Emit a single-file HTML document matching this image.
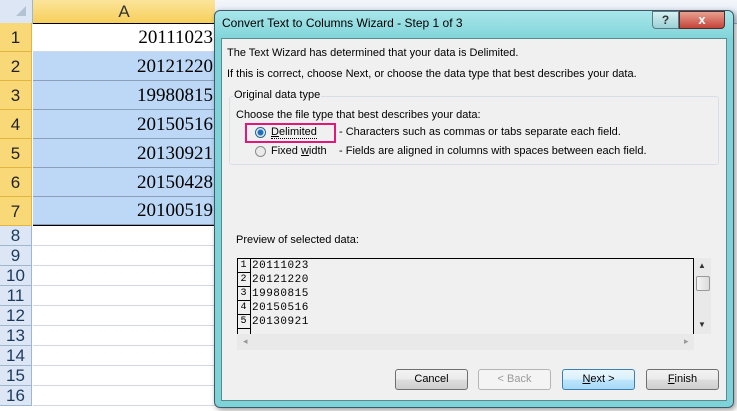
<!DOCTYPE html>
<html><head><style>
body{margin:0;width:737px;height:411px;overflow:hidden;background:#fff;font-family:"Liberation Sans",sans-serif;position:relative}
.a{position:absolute}
.rh{position:absolute;left:0;width:32px;background:#dce6f4;border-right:1px solid #9eb6ce;border-bottom:1px solid #9eb6ce;box-sizing:border-box;text-align:center;color:#1c3a5e;font-size:17px}
.rhs{background:#f9d977;border-color:#e2b540;color:#222}
.cell{position:absolute;left:33px;width:188px;border-bottom:1px solid #d0d7e5;box-sizing:border-box;text-align:right;font-family:"Liberation Serif",serif;font-size:19px;padding-right:8px}
.sel{background:#bcd8f6;border-bottom:1px solid #8a9fb8}
.t{position:absolute;font-size:11px;color:#000;white-space:nowrap}
.btn{position:absolute;top:369px;width:73px;height:21px;border:1px solid #707070;border-radius:3px;background:linear-gradient(#f2f2f2,#ebebeb 50%,#dddddd 51%,#cfcfcf);box-sizing:border-box;text-align:center;font-size:11px;line-height:19px}
.ln{position:absolute;left:237px;width:14px;height:14px;border-right:1px solid #000;border-bottom:1px solid #000;box-sizing:border-box;font-family:"Liberation Mono",monospace;font-size:10px;line-height:14px;text-align:center}
.pv{position:absolute;left:252px;font-family:"Liberation Mono",monospace;font-size:11px;line-height:14px;letter-spacing:0.5px}
</style></head><body>
<div class="a" style="left:0;top:0;width:737px;height:23px;background:linear-gradient(#f4f7fb,#dde6f2);border-bottom:1px solid #9eb6ce"></div>
<div class="a" style="left:0;top:0;width:32px;height:23px;background:#dce6f4;border-right:1px solid #9eb6ce"></div>
<div class="a" style="left:16px;top:6px;width:0;height:0;border-left:10px solid transparent;border-bottom:10px solid #b4c2d4"></div>
<div class="a" style="left:33px;top:0;width:182px;height:23px;background:linear-gradient(#fbe49a,#f7cf5a);border-bottom:1px solid #e2b540;text-align:center;font-size:17px;line-height:23px;color:#333">A</div>
<div class="rh rhs" style="top:23px;height:29px;line-height:29px">1</div>
<div class="rh rhs" style="top:52px;height:29px;line-height:29px">2</div>
<div class="rh rhs" style="top:81px;height:29px;line-height:29px">3</div>
<div class="rh rhs" style="top:110px;height:29px;line-height:29px">4</div>
<div class="rh rhs" style="top:139px;height:29px;line-height:29px">5</div>
<div class="rh rhs" style="top:168px;height:29px;line-height:29px">6</div>
<div class="rh rhs" style="top:197px;height:29px;line-height:29px">7</div>
<div class="a" style="left:33px;top:23px;width:182px;height:203px;border:1px solid #000;box-sizing:border-box"></div>
<div class="cell" style="top:24px;height:28px;line-height:28px;background:#fff">20111023</div>
<div class="cell sel" style="top:52px;height:29px;line-height:29px">20121220</div>
<div class="cell sel" style="top:81px;height:29px;line-height:29px">19980815</div>
<div class="cell sel" style="top:110px;height:29px;line-height:29px">20150516</div>
<div class="cell sel" style="top:139px;height:29px;line-height:29px">20130921</div>
<div class="cell sel" style="top:168px;height:29px;line-height:29px">20150428</div>
<div class="cell sel" style="top:197px;height:28px;line-height:28px">20100519</div>
<div class="rh" style="top:226px;height:20px;line-height:20px">8</div>
<div class="rh" style="top:246px;height:20px;line-height:20px">9</div>
<div class="rh" style="top:266px;height:20px;line-height:20px">10</div>
<div class="rh" style="top:286px;height:20px;line-height:20px">11</div>
<div class="rh" style="top:306px;height:20px;line-height:20px">12</div>
<div class="rh" style="top:326px;height:20px;line-height:20px">13</div>
<div class="rh" style="top:346px;height:20px;line-height:20px">14</div>
<div class="rh" style="top:366px;height:20px;line-height:20px">15</div>
<div class="rh" style="top:386px;height:20px;line-height:20px">16</div>
<div class="cell" style="top:226px;height:20px"></div><div class="cell" style="top:246px;height:20px"></div><div class="cell" style="top:266px;height:20px"></div><div class="cell" style="top:286px;height:20px"></div><div class="cell" style="top:306px;height:20px"></div><div class="cell" style="top:326px;height:20px"></div><div class="cell" style="top:346px;height:20px"></div><div class="cell" style="top:366px;height:20px"></div><div class="cell" style="top:386px;height:20px"></div>
<!-- dialog -->
<div class="a" style="left:214px;top:10px;width:520px;height:398px;border:1px solid #3c5a6a;border-radius:6px;background:linear-gradient(#a8e6ea,#7dd3d8 30px,#7dd3d8);box-sizing:border-box;box-shadow:2px 2px 6px rgba(0,0,0,.4)"></div>
<div class="t" style="left:222px;top:16px;font-size:12px">Convert Text to Columns Wizard - Step 1 of 3</div>
<div class="a" style="left:652px;top:11px;width:27px;height:18px;border:1px solid #5a7a86;border-radius:0 0 0 4px;background:linear-gradient(#d6f0f2,#9bd0d6);box-sizing:border-box;text-align:center;font-size:12px;font-weight:bold;color:#333;line-height:16px">?</div>
<div class="a" style="left:679px;top:11px;width:46px;height:18px;border:1px solid #5a2a2a;border-radius:0 0 4px 0;background:linear-gradient(#e8a090,#c4453a);box-sizing:border-box;text-align:center;font-size:13px;font-weight:bold;color:#fff;line-height:16px">x</div>
<div class="a" style="left:221px;top:38px;width:506px;height:363px;background:#f0f0f0;border:1px solid #5b8b8f;box-sizing:border-box"></div>
<div class="t" style="left:227px;top:47px">The Text Wizard has determined that your data is Delimited.</div>
<div class="t" style="left:227px;top:68px">If this is correct, choose Next, or choose the data type that best describes your data.</div>
<div class="a" style="left:229px;top:96px;width:490px;height:69px;border:1px solid #d5dfe5;border-radius:3px;box-sizing:border-box"></div>
<div class="t" style="left:233px;top:89px;background:#f0f0f0;padding:0 1px">Original data type</div>
<div class="t" style="left:236px;top:109px">Choose the file type that best describes your data:</div>
<div class="a" style="left:245px;top:123px;width:91px;height:20px;border:2px solid #e0187a;box-sizing:border-box"></div>
<div class="a" style="left:255px;top:127px;width:11px;height:11px;border:1px solid #2c628b;border-radius:50%;background:radial-gradient(#1c6fb8 2.5px,#e6eef5 3.5px);box-sizing:border-box"></div>
<div class="t" style="left:271px;top:126px;border-bottom:1px dotted #000;line-height:12px"><u>D</u>elimited</div>
<div class="t" style="left:339px;top:126px">- Characters such as commas or tabs separate each field.</div>
<div class="a" style="left:255px;top:146px;width:11px;height:11px;border:1px solid #8c8c8c;border-radius:50%;background:#eaeaea;box-sizing:border-box"></div>
<div class="t" style="left:271px;top:145px">Fixed <u>w</u>idth</div>
<div class="t" style="left:339px;top:145px">- Fields are aligned in columns with spaces between each field.</div>
<div class="t" style="left:236px;top:234px">Preview of selected data:</div>
<div class="a" style="left:237px;top:258px;width:457px;height:76px;border:1px solid #000;border-bottom:none;background:#f0f0f0;box-sizing:border-box;overflow:hidden"></div>
<div class="ln" style="top:259px">1</div><div class="ln" style="top:273px">2</div><div class="ln" style="top:287px">3</div><div class="ln" style="top:301px">4</div><div class="ln" style="top:315px">5</div><div class="ln" style="top:329px;height:5px;border-bottom:none"></div>
<div class="pv" style="top:259px">20111023</div>
<div class="pv" style="top:273px">20121220</div>
<div class="pv" style="top:287px">19980815</div>
<div class="pv" style="top:301px">20150516</div>
<div class="pv" style="top:315px">20130921</div>
<div class="a" style="left:694px;top:258px;width:17px;height:76px;background:#e9e9e9"></div>
<div class="t" style="left:698px;top:261px;font-size:8px;color:#333">▲</div>
<div class="a" style="left:696px;top:276px;width:14px;height:15px;border:1px solid #999;border-radius:2px;background:linear-gradient(90deg,#f4f4f4,#dcdcdc);box-sizing:border-box"></div>
<div class="t" style="left:698px;top:320px;font-size:8px;color:#333">▼</div>
<div class="a" style="left:237px;top:334px;width:457px;height:16px;background:#e9e9e9"></div>
<div class="t" style="left:243px;top:336px;font-size:9px;color:#999">◂</div>
<div class="t" style="left:684px;top:336px;font-size:9px;color:#999">▸</div>
<div class="btn" style="left:395px">Cancel</div>
<div class="btn" style="left:478px;color:#9a9a9a;border-color:#b5b5b5;background:#f4f4f4">&lt; Back</div>
<div class="btn" style="left:562px;border-color:#3c7fb1;background:linear-gradient(#eaf6fd,#d9f0fc 50%,#bee6fd 51%,#a7d9f5)"><u>N</u>ext &gt;</div>
<div class="btn" style="left:646px"><u>F</u>inish</div>
</body></html>
